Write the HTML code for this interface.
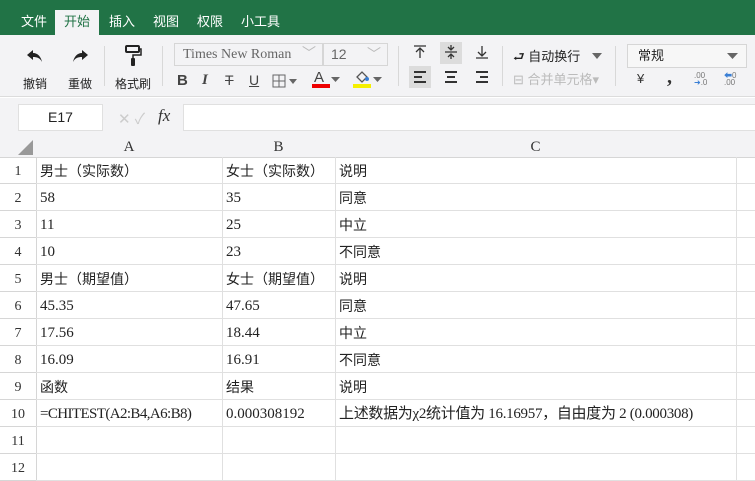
<!DOCTYPE html>
<html><head><meta charset="utf-8"><style>
*{margin:0;padding:0;box-sizing:border-box}
body{width:755px;height:478px;overflow:hidden;background:#fff;font-family:"Liberation Sans","Noto Sans CJK SC",sans-serif;position:relative}
.a{position:absolute}
.top{left:0;top:0;width:755px;height:35px;background:#217346}
.tab{top:10px;font-size:13px;color:#fff;height:25px;line-height:24px}
.tb{left:0;top:35px;width:755px;height:62px;background:#f3f3f5;border-bottom:1px solid #dcdcdc}
.sep{width:1px;background:#d8d8d8;top:46px;height:40px}
.lbl{font-size:12px;color:#222}
.fx{left:0;top:98px;width:755px;height:40px;background:#f3f3f5}
.cell{position:absolute;border-right:1px solid #e0e0e0;border-bottom:1px solid #e0e0e0;font-family:"Liberation Serif","Noto Sans CJK SC",serif;font-size:15px;color:#222;padding-left:4px;padding-top:2px;line-height:25px;white-space:nowrap;overflow:hidden}
.cjk{font-family:"Liberation Sans","Noto Sans CJK SC",sans-serif;font-size:14px}
.hd{background:#f3f3f5;text-align:center;padding:0;color:#333;border-color:#d6d6d6}
.rh{text-align:center;padding-left:0;color:#333;border-color:#d6d6d6;font-size:14px}
</style></head><body>
<div class="a top"></div>
<div class="a" style="left:55px;top:10px;width:44px;height:25px;background:#f3f3f5"></div>
<div class="a tab" style="left:21px">文件</div>
<div class="a tab" style="left:64px;color:#217346">开始</div>
<div class="a tab" style="left:109px">插入</div>
<div class="a tab" style="left:153px">视图</div>
<div class="a tab" style="left:197px">权限</div>
<div class="a tab" style="left:241px">小工具</div>
<div class="a tb"></div>
<svg class="a" style="left:26px;top:48px" width="18" height="16" viewBox="0 0 18 16"><path d="M7 2 L1 7 L7 12 L7 9 C11 9 14 10 16 14 C15 9 12 5 7 5 Z" fill="#222"/></svg>
<svg class="a" style="left:71px;top:48px" width="18" height="16" viewBox="0 0 18 16"><path d="M11 2 L17 7 L11 12 L11 9 C7 9 4 10 2 14 C3 9 6 5 11 5 Z" fill="#222"/></svg>
<div class="a lbl" style="left:23px;top:75px">撤销</div>
<div class="a lbl" style="left:68px;top:75px">重做</div>
<div class="a sep" style="left:104px"></div>
<svg class="a" style="left:124px;top:45px" width="18" height="22" viewBox="0 0 18 22"><rect x="2" y="1" width="13" height="6" rx="1" fill="none" stroke="#222" stroke-width="2"/><path d="M15 4 H17 V10 H9 V13" fill="none" stroke="#222" stroke-width="1.5"/><rect x="7" y="13" width="4" height="8" rx="1" fill="#222"/></svg>
<div class="a lbl" style="left:115px;top:75px">格式刷</div>
<div class="a sep" style="left:162px"></div>
<div class="a" style="left:174px;top:43px;width:149px;height:23px;border:1px solid #d6d6d6;font-family:'Liberation Serif',serif;font-size:14px;color:#666;padding-left:8px;line-height:21px">Times New Roman<span style="position:absolute;right:6px;color:#bbb">﹀</span></div>
<div class="a" style="left:323px;top:43px;width:65px;height:23px;border:1px solid #d6d6d6;font-size:14px;color:#666;padding-left:7px;line-height:21px">12<span style="position:absolute;right:6px;color:#bbb">﹀</span></div>
<div class="a" style="left:177px;top:72px;font-size:15px;font-weight:bold;color:#444">B</div>
<div class="a" style="left:202px;top:72px;font-size:15px;font-style:italic;font-weight:bold;color:#444;font-family:'Liberation Serif',serif">I</div>
<div class="a" style="left:225px;top:72px;font-size:14px;color:#444;text-decoration:line-through">T</div>
<div class="a" style="left:249px;top:72px;font-size:14px;color:#444;text-decoration:underline">U</div>
<svg class="a" style="left:272px;top:74px" width="28" height="14"><rect x="1" y="1" width="12" height="12" fill="none" stroke="#666"/><path d="M7 1V13M1 7H13" stroke="#666"/><path d="M17 5H25L21 10Z" fill="#666"/></svg>
<div class="a" style="left:314px;top:69px;font-size:15px;color:#444">A</div>
<div class="a" style="left:312px;top:84px;width:18px;height:4px;background:#e00"></div>
<svg class="a" style="left:331px;top:76px" width="10" height="8"><path d="M0 1H9L4.5 6Z" fill="#666"/></svg>
<svg class="a" style="left:354px;top:70px" width="16" height="14"><path d="M3 7 L8 2 L13 7 L8 12Z" fill="none" stroke="#555" stroke-width="1.3"/><circle cx="13" cy="9" r="2" fill="#3a7fd5"/></svg>
<div class="a" style="left:353px;top:84px;width:18px;height:4px;background:#f5f000"></div>
<svg class="a" style="left:373px;top:76px" width="10" height="8"><path d="M0 1H9L4.5 6Z" fill="#666"/></svg>
<div class="a sep" style="left:398px"></div>
<div class="a" style="left:440px;top:42px;width:22px;height:22px;background:#dcdcdc"></div>
<div class="a" style="left:409px;top:66px;width:22px;height:22px;background:#dcdcdc"></div>
<svg class="a" style="left:412px;top:44px" width="16" height="16"><path d="M2 2H14M8 4V14M4 8L8 4L12 8" fill="none" stroke="#333" stroke-width="1.3"/></svg>
<svg class="a" style="left:443px;top:44px" width="16" height="16"><path d="M2 8H14M8 1V5M5 3L8 6L11 3M8 15V11M5 13L8 10L11 13" fill="none" stroke="#333" stroke-width="1.3"/></svg>
<svg class="a" style="left:474px;top:44px" width="16" height="16"><path d="M2 14H14M8 2V12M4 8L8 12L12 8" fill="none" stroke="#333" stroke-width="1.3"/></svg>
<svg class="a" style="left:412px;top:70px" width="16" height="14"><path d="M2 2H14M2 7H10M2 12H14" stroke="#333" stroke-width="2"/></svg>
<svg class="a" style="left:443px;top:70px" width="16" height="14"><path d="M2 2H14M4 7H12M2 12H14" stroke="#333" stroke-width="2"/></svg>
<svg class="a" style="left:474px;top:70px" width="16" height="14"><path d="M2 2H14M6 7H14M2 12H14" stroke="#333" stroke-width="2"/></svg>
<div class="a sep" style="left:502px"></div>
<div class="a" style="left:513px;top:46px;font-size:13px;color:#222">⮐ 自动换行</div>
<svg class="a" style="left:592px;top:52px" width="10" height="8"><path d="M0 1H10L5 7Z" fill="#666"/></svg>
<div class="a" style="left:513px;top:69px;font-size:13px;color:#bbb">⊟ 合并单元格▾</div>
<div class="a sep" style="left:615px"></div>
<div class="a" style="left:627px;top:44px;width:120px;height:24px;border:1px solid #d6d6d6;background:#f7f7f7;font-size:13px;color:#222;padding-left:10px;line-height:22px">常规</div>
<svg class="a" style="left:727px;top:52px" width="12" height="8"><path d="M0 1H11L5.5 7Z" fill="#666"/></svg>
<div class="a" style="left:637px;top:71px;font-size:13px;color:#333">¥</div>
<div class="a" style="left:667px;top:66px;font-size:20px;font-weight:bold;color:#333;font-family:'Liberation Serif',serif">,</div>
<div class="a" style="left:694px;top:72px;font-size:8px;color:#777;line-height:7px">.00<br><span style="color:#3a7fd5">➜</span>.0</div>
<div class="a" style="left:724px;top:72px;font-size:8px;color:#777;line-height:7px"><span style="color:#3a7fd5">⬅</span>0<br>.00</div>
<div class="a fx"></div>
<div class="a" style="left:18px;top:104px;width:85px;height:27px;background:#fff;border:1px solid #e0e0e0;font-size:14px;text-align:center;line-height:25px;color:#222">E17</div>
<div class="a" style="left:118px;top:108px;font-size:15px;color:#ccc">✕ ✓</div>
<div class="a" style="left:158px;top:106px;font-size:17px;font-style:italic;color:#333;font-family:'Liberation Serif',serif">fx</div>
<div class="a" style="left:183px;top:104px;width:580px;height:27px;background:#fff;border:1px solid #e0e0e0"></div>
<div class="a" style="left:0;top:138px;width:755px;height:20px">
<div class="cell hd" style="left:0;top:0;width:37px;height:20px"></div>
<svg class="a" style="left:18px;top:2px" width="16" height="15"><path d="M15 0V15H0Z" fill="#999"/></svg>
<div class="cell hd" style="left:36px;top:0;width:187px;height:20px;line-height:19px">A</div>
<div class="cell hd" style="left:222px;top:0;width:114px;height:20px;line-height:19px">B</div>
<div class="cell hd" style="left:335px;top:0;width:402px;height:20px;line-height:19px">C</div>
<div class="cell hd" style="left:736px;top:0;width:30px;height:20px"></div>
</div>
<div class="a" style="left:0;top:157px;width:755px">
<div class="cell rh" style="left:0;top:0;width:37px;height:27px">1</div><div class="cell cjk" style="left:36px;top:0;width:187px;height:27px">男士（实际数）</div><div class="cell cjk" style="left:222px;top:0;width:114px;height:27px">女士（实际数）</div><div class="cell cjk" style="left:335px;top:0;width:402px;height:27px">说明</div><div class="cell" style="left:736px;top:0;width:30px;height:27px"></div>
<div class="cell rh" style="left:0;top:27px;width:37px;height:27px">2</div><div class="cell" style="left:36px;top:27px;width:187px;height:27px">58</div><div class="cell" style="left:222px;top:27px;width:114px;height:27px">35</div><div class="cell cjk" style="left:335px;top:27px;width:402px;height:27px">同意</div><div class="cell" style="left:736px;top:27px;width:30px;height:27px"></div>
<div class="cell rh" style="left:0;top:54px;width:37px;height:27px">3</div><div class="cell" style="left:36px;top:54px;width:187px;height:27px">11</div><div class="cell" style="left:222px;top:54px;width:114px;height:27px">25</div><div class="cell cjk" style="left:335px;top:54px;width:402px;height:27px">中立</div><div class="cell" style="left:736px;top:54px;width:30px;height:27px"></div>
<div class="cell rh" style="left:0;top:81px;width:37px;height:27px">4</div><div class="cell" style="left:36px;top:81px;width:187px;height:27px">10</div><div class="cell" style="left:222px;top:81px;width:114px;height:27px">23</div><div class="cell cjk" style="left:335px;top:81px;width:402px;height:27px">不同意</div><div class="cell" style="left:736px;top:81px;width:30px;height:27px"></div>
<div class="cell rh" style="left:0;top:108px;width:37px;height:27px">5</div><div class="cell cjk" style="left:36px;top:108px;width:187px;height:27px">男士（期望值）</div><div class="cell cjk" style="left:222px;top:108px;width:114px;height:27px">女士（期望值）</div><div class="cell cjk" style="left:335px;top:108px;width:402px;height:27px">说明</div><div class="cell" style="left:736px;top:108px;width:30px;height:27px"></div>
<div class="cell rh" style="left:0;top:135px;width:37px;height:27px">6</div><div class="cell" style="left:36px;top:135px;width:187px;height:27px">45.35</div><div class="cell" style="left:222px;top:135px;width:114px;height:27px">47.65</div><div class="cell cjk" style="left:335px;top:135px;width:402px;height:27px">同意</div><div class="cell" style="left:736px;top:135px;width:30px;height:27px"></div>
<div class="cell rh" style="left:0;top:162px;width:37px;height:27px">7</div><div class="cell" style="left:36px;top:162px;width:187px;height:27px">17.56</div><div class="cell" style="left:222px;top:162px;width:114px;height:27px">18.44</div><div class="cell cjk" style="left:335px;top:162px;width:402px;height:27px">中立</div><div class="cell" style="left:736px;top:162px;width:30px;height:27px"></div>
<div class="cell rh" style="left:0;top:189px;width:37px;height:27px">8</div><div class="cell" style="left:36px;top:189px;width:187px;height:27px">16.09</div><div class="cell" style="left:222px;top:189px;width:114px;height:27px">16.91</div><div class="cell cjk" style="left:335px;top:189px;width:402px;height:27px">不同意</div><div class="cell" style="left:736px;top:189px;width:30px;height:27px"></div>
<div class="cell rh" style="left:0;top:216px;width:37px;height:27px">9</div><div class="cell cjk" style="left:36px;top:216px;width:187px;height:27px">函数</div><div class="cell cjk" style="left:222px;top:216px;width:114px;height:27px">结果</div><div class="cell cjk" style="left:335px;top:216px;width:402px;height:27px">说明</div><div class="cell" style="left:736px;top:216px;width:30px;height:27px"></div>
<div class="cell rh" style="left:0;top:243px;width:37px;height:27px">10</div><div class="cell" style="left:36px;top:243px;width:187px;height:27px;letter-spacing:-0.6px">=CHITEST(A2:B4,A6:B8)</div><div class="cell" style="left:222px;top:243px;width:114px;height:27px">0.000308192</div><div class="cell" style="left:335px;top:243px;width:402px;height:27px;letter-spacing:-0.3px">上述数据为χ2统计值为 16.16957，自由度为 2 (0.000308)</div><div class="cell" style="left:736px;top:243px;width:30px;height:27px"></div>
<div class="cell rh" style="left:0;top:270px;width:37px;height:27px">11</div><div class="cell" style="left:36px;top:270px;width:187px;height:27px"></div><div class="cell" style="left:222px;top:270px;width:114px;height:27px"></div><div class="cell" style="left:335px;top:270px;width:402px;height:27px"></div><div class="cell" style="left:736px;top:270px;width:30px;height:27px"></div>
<div class="cell rh" style="left:0;top:297px;width:37px;height:27px">12</div><div class="cell" style="left:36px;top:297px;width:187px;height:27px"></div><div class="cell" style="left:222px;top:297px;width:114px;height:27px"></div><div class="cell" style="left:335px;top:297px;width:402px;height:27px"></div><div class="cell" style="left:736px;top:297px;width:30px;height:27px"></div>
</div>
</body></html>
